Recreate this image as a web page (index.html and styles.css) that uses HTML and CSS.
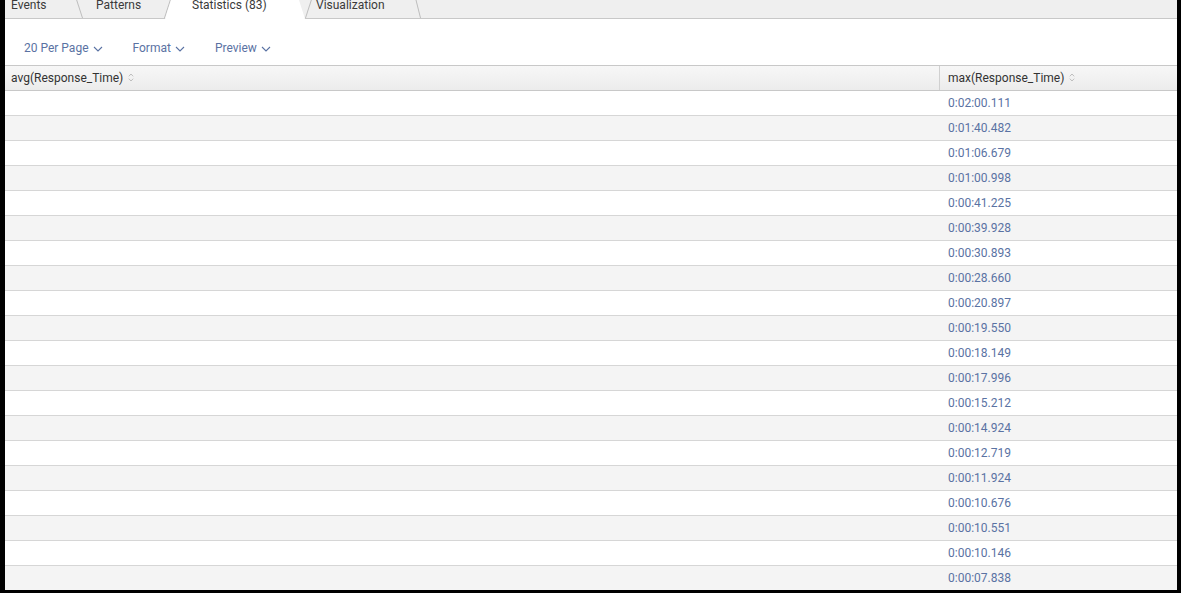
FILE: index.html
```html
<!DOCTYPE html>
<html>
<head>
<meta charset="utf-8">
<link rel="stylesheet" href="styles.css">
</head>
<body>
<div class="frame">
  <div class="tabbar">
    <div class="tab t-events">Events</div>
    <div class="tab t-patterns">Patterns</div>
    <div class="tab t-stats active">Statistics (83)</div>
    <div class="tab t-vis">Visualization</div>
  </div>
  <div class="toolbar">
    <span class="menu">20 Per Page <svg class="chev" width="10" height="6" viewBox="0 0 10 6"><path d="M1 1 L5 5 L9 1" fill="none" stroke="currentColor" stroke-width="1.1"/></svg></span>
    <span class="menu">Format <svg class="chev" width="10" height="6" viewBox="0 0 10 6"><path d="M1 1 L5 5 L9 1" fill="none" stroke="currentColor" stroke-width="1.1"/></svg></span>
    <span class="menu">Preview <svg class="chev" width="10" height="6" viewBox="0 0 10 6"><path d="M1 1 L5 5 L9 1" fill="none" stroke="currentColor" stroke-width="1.1"/></svg></span>
  </div>
  <div class="table">
    <div class="head">
      <div class="cell c1">avg(Response_Time) <svg class="sort" width="6" height="9" viewBox="0 0 6 9"><path d="M0.8 3.3 L3 1 L5.2 3.3 M0.8 5.7 L3 8 L5.2 5.7" fill="none" stroke="currentColor" stroke-width="0.9"/></svg></div>
      <div class="cell c2">max(Response_Time) <svg class="sort" width="6" height="9" viewBox="0 0 6 9"><path d="M0.8 3.3 L3 1 L5.2 3.3 M0.8 5.7 L3 8 L5.2 5.7" fill="none" stroke="currentColor" stroke-width="0.9"/></svg></div>
    </div>
    <div class="row"><div class="cell c1"></div><div class="cell c2 val">0:02:00.111</div></div>
    <div class="row"><div class="cell c1"></div><div class="cell c2 val">0:01:40.482</div></div>
    <div class="row"><div class="cell c1"></div><div class="cell c2 val">0:01:06.679</div></div>
    <div class="row"><div class="cell c1"></div><div class="cell c2 val">0:01:00.998</div></div>
    <div class="row"><div class="cell c1"></div><div class="cell c2 val">0:00:41.225</div></div>
    <div class="row"><div class="cell c1"></div><div class="cell c2 val">0:00:39.928</div></div>
    <div class="row"><div class="cell c1"></div><div class="cell c2 val">0:00:30.893</div></div>
    <div class="row"><div class="cell c1"></div><div class="cell c2 val">0:00:28.660</div></div>
    <div class="row"><div class="cell c1"></div><div class="cell c2 val">0:00:20.897</div></div>
    <div class="row"><div class="cell c1"></div><div class="cell c2 val">0:00:19.550</div></div>
    <div class="row"><div class="cell c1"></div><div class="cell c2 val">0:00:18.149</div></div>
    <div class="row"><div class="cell c1"></div><div class="cell c2 val">0:00:17.996</div></div>
    <div class="row"><div class="cell c1"></div><div class="cell c2 val">0:00:15.212</div></div>
    <div class="row"><div class="cell c1"></div><div class="cell c2 val">0:00:14.924</div></div>
    <div class="row"><div class="cell c1"></div><div class="cell c2 val">0:00:12.719</div></div>
    <div class="row"><div class="cell c1"></div><div class="cell c2 val">0:00:11.924</div></div>
    <div class="row"><div class="cell c1"></div><div class="cell c2 val">0:00:10.676</div></div>
    <div class="row"><div class="cell c1"></div><div class="cell c2 val">0:00:10.551</div></div>
    <div class="row"><div class="cell c1"></div><div class="cell c2 val">0:00:10.146</div></div>
    <div class="row"><div class="cell c1"></div><div class="cell c2 val">0:00:07.838</div></div>
  </div>
</div>
</body>
</html>
```
FILE: styles.css
```css
html, body {
  margin: 0;
  padding: 0;
  background: #000;
  width: 1181px;
  height: 593px;
  overflow: hidden;
}
.frame {
  margin-left: 5px;
  width: 1172px;
  height: 590px;
  background: #fff;
  font-family: Roboto, "Liberation Sans", Arial, sans-serif;
  overflow: hidden;
}
.tabbar {
  display: flex;
  height: 18px;
  background: #efefef;
  border-bottom: 1px solid #c8c8c8;
  font-size: 12px;
  color: #3a3a3a;
}
.tab {
  position: relative;
  height: 18px;
  line-height: 11px;
  box-sizing: border-box;
  white-space: nowrap;
}
.t-events { width: 78px; padding-left: 6px; }
.t-patterns { width: 82px; padding-left: 13px; }
.t-stats { width: 140px; padding-left: 27px; }
.t-stats.active {
  background: #fff;
  height: 19px;
  clip-path: polygon(0 100%, 6px 0, calc(100% - 6px) 0, 100% 100%);
}
.t-vis { width: 116px; padding-left: 11px; }
.t-events::after,
.t-patterns::after,
.t-vis::before,
.t-vis::after {
  content: "";
  position: absolute;
  top: 0;
  width: 1px;
  height: 18px;
  background: #bdbdbd;
  transform-origin: bottom;
}
.t-events::after { right: 0; transform: skewX(18deg); }
.t-patterns::after { right: 0; transform: skewX(-18deg); }
.t-vis::before { left: 0; transform: skewX(-18deg); }
.t-vis::after { right: 0; transform: skewX(14deg); }
.toolbar {
  display: flex;
  align-items: center;
  gap: 30px;
  height: 34px;
  padding-top: 12px;
  padding-left: 19px;
  font-size: 12px;
  color: #5a72a3;
}
.menu {
  display: inline-flex;
  align-items: center;
  gap: 4px;
}
.chev { margin-top: 1px; }
.table {
  border-top: 1px solid #c8c8c8;
}
.head {
  display: flex;
  height: 24px;
  background: linear-gradient(#f7f7f7, #ececec);
  border-bottom: 1px solid #c8c8c8;
  font-size: 12px;
  color: #333;
}
.head .cell {
  display: flex;
  align-items: center;
  gap: 5px;
  padding-bottom: 1px;
  box-sizing: border-box;
}
.cell.c1 {
  width: 934px;
  padding-left: 6px;
  box-sizing: border-box;
}
.cell.c2 {
  flex: 1;
  padding-left: 8px;
}
.head .c2 {
  border-left: 1px solid #d0d0d0;
}
.sort { color: #b8b8b8; }
.row {
  display: flex;
  height: 24px;
  border-bottom: 1px solid #d6d6d6;
  align-items: center;
}
.row:nth-child(odd) {
  background: #f4f4f4;
}
.row .c2 {
  padding-left: 9px;
}
.val {
  font-size: 12px;
  color: #5a72a3;
}
```
